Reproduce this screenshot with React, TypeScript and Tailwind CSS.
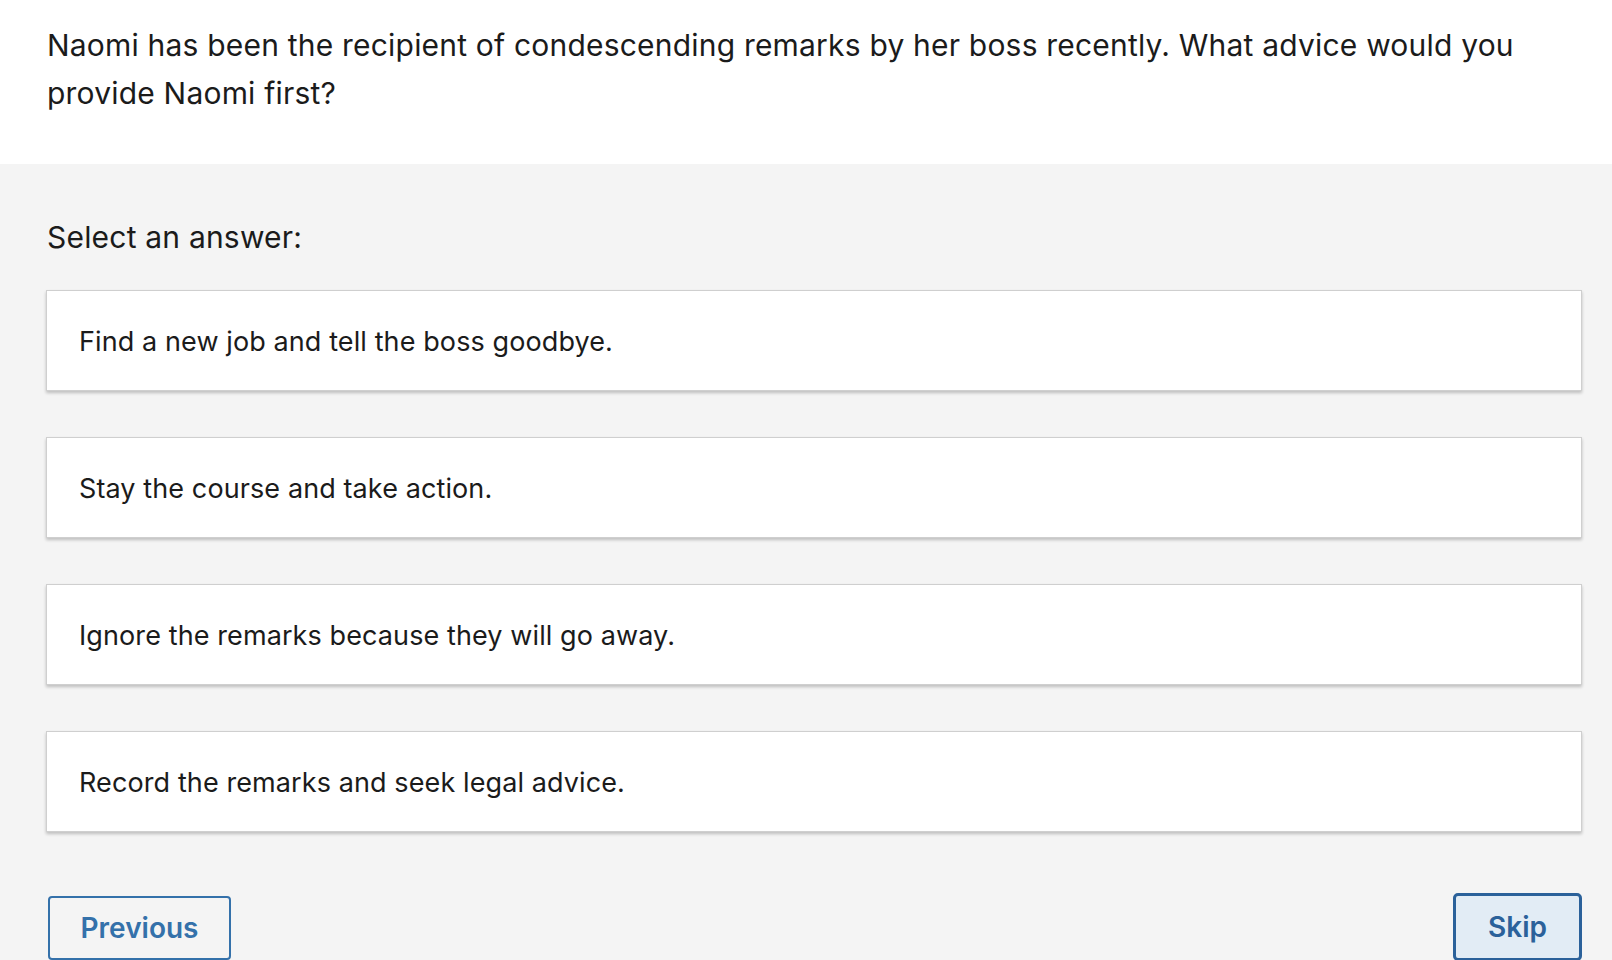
import React from "react";

const answers = [
  "Find a new job and tell the boss goodbye.",
  "Stay the course and take action.",
  "Ignore the remarks because they will go away.",
  "Record the remarks and seek legal advice.",
];

export default function App() {
  return (
    <div
      className="w-[1612px] h-[960px] overflow-hidden bg-[#f4f4f4] text-[#1b1b1b]"
      style={{ fontFamily: "Inter, 'Noto Sans', sans-serif" }}
    >
      <div className="bg-white pl-[47px] pr-[30px] pt-[21px] h-[164px]">
        <p className="text-[30px] leading-[48px] tracking-[0.2px]">
          Naomi has been the recipient of condescending remarks by her boss recently. What advice would you provide Naomi first?
        </p>
      </div>
      <div className="pl-[46px] pr-[30px] pt-[49px]">
        <p className="pl-[1px] text-[30px] leading-[48px] tracking-[0.2px]">Select an answer:</p>
        <div className="mt-[29px] flex flex-col gap-[46px]">
          {answers.map((a) => (
            <button
              key={a}
              className="h-[101px] w-full bg-white border border-[#cfcfcf] shadow-[0_2px_3px_rgba(0,0,0,0.22)] text-left pl-[32px] pt-[3px] text-[27px] tracking-[0.1px] text-[#1b1b1b]"
            >
              {a}
            </button>
          ))}
        </div>
        <div className="mt-[61px] flex justify-between items-start">
          <button className="ml-[2px] mt-[3px] w-[183px] h-[64px] rounded-[4px] border-2 border-[#3471aa] text-[#3471aa] font-semibold text-[28px]">
            Previous
          </button>
          <button className="w-[129px] h-[68px] rounded-[5px] border-[3px] border-[#2b619a] bg-[#e2ecf5] text-[#2b619a] font-semibold text-[28px]">
            Skip
          </button>
        </div>
      </div>
    </div>
  );
}
